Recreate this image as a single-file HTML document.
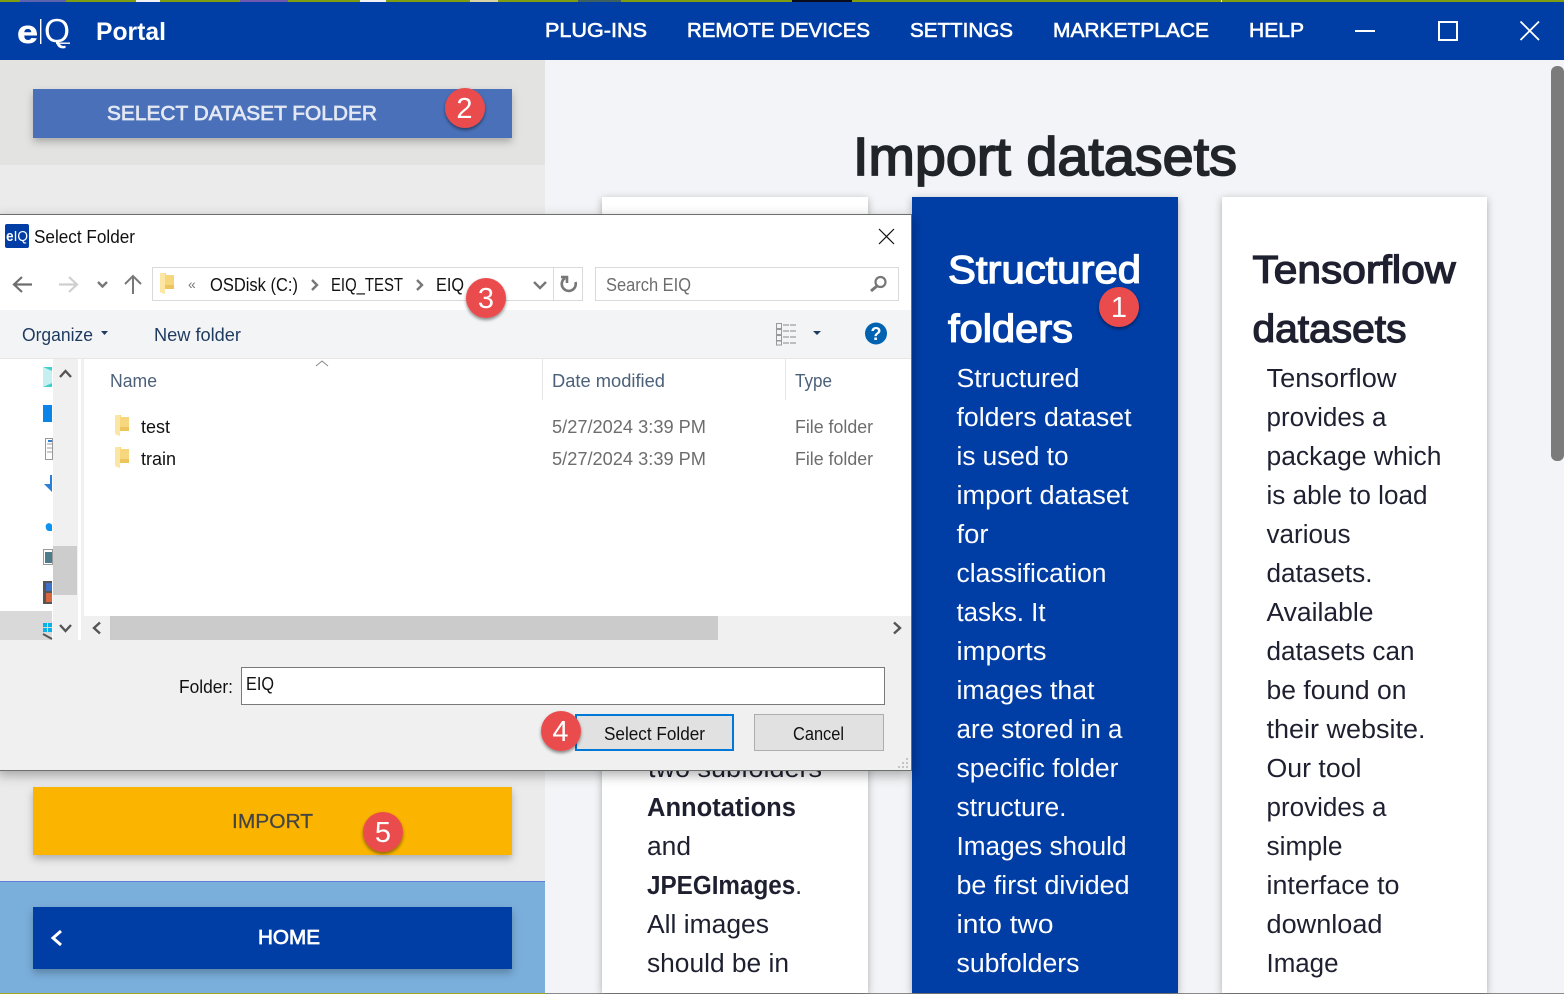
<!DOCTYPE html>
<html><head><meta charset="utf-8"><title>eIQ Portal</title>
<style>
html,body{margin:0;padding:0;width:1564px;height:994px;overflow:hidden;background:#f3f4f7}
svg{display:block}
text{font-family:"Liberation Sans",sans-serif;white-space:pre}
.b{font-size:25.5px;fill:#1e2030}
.w{font-size:25.5px;fill:#fff}
.h{font-size:39px;fill:#1e2030;stroke:#1e2030;stroke-width:1.3px}
.hw{font-size:39px;fill:#fff;stroke:#fff;stroke-width:1.3px}
.nav{font-size:20px;fill:#fff;stroke:#fff;stroke-width:.6px}
.d{font-size:18px;fill:#111}
.g{font-size:18px;fill:#6d6d6d}
.o{font-size:18px;fill:#1f3a5f}
.n{font-size:18px;fill:#4c607a}
.num{font-size:29px;fill:#fff;text-anchor:middle}
</style></head><body>
<svg width="1564" height="994" viewBox="0 0 1564 994" xmlns="http://www.w3.org/2000/svg">
<defs>
<filter id="s" x="-10%" y="-10%" width="120%" height="120%"><feDropShadow dx="0" dy="2" stdDeviation="4" flood-color="#000" flood-opacity=".3"/></filter>
<filter id="sb" x="-10%" y="-30%" width="120%" height="170%"><feDropShadow dx="0" dy="4" stdDeviation="4" flood-color="#000" flood-opacity=".25"/></filter>
<filter id="sd" x="-5%" y="-5%" width="110%" height="110%"><feDropShadow dx="0" dy="4" stdDeviation="6" flood-color="#000" flood-opacity=".32"/></filter>
<filter id="sc" x="-30%" y="-30%" width="160%" height="170%"><feDropShadow dx="0" dy="2" stdDeviation="1.5" flood-color="#000" flood-opacity=".45"/></filter>
<g id="fld"><path d="M0 0H6V2H14V16H5V21L0 19Z" fill="#f6d77d"/><path d="M0 0H5V21L0 19Z" fill="#fbe6a4"/><path d="M5 16H14V12H5Z" fill="#eec45e"/></g>
</defs>

<!-- background -->
<rect width="1564" height="994" fill="#f3f4f7"/>
<!-- top strip -->
<rect width="1564" height="2" fill="#7f9d10"/>
<rect x="20" width="46" height="2" fill="#5b62ae"/><rect x="136" width="24" height="2" fill="#f1f1f7"/><rect x="240" width="48" height="2" fill="#6f58b0"/><rect x="360" width="26" height="2" fill="#f1f1f7"/><rect x="470" width="28" height="2" fill="#d9d3a8"/><rect x="578" width="43" height="2" fill="#3d6060"/><rect x="792" width="60" height="2" fill="#0b0b1e"/><rect x="1221" width="1" height="2" fill="#fff"/>
<!-- header -->
<rect y="2" width="1564" height="58" fill="#003da5"/>
<text x="17" y="43" font-size="32" font-weight="bold" fill="#fff" textLength="21" lengthAdjust="spacingAndGlyphs" stroke="#fff" stroke-width=".5">e</text>
<rect x="40" y="19" width="1.4" height="25" fill="#fff"/>
<text x="44" y="42" font-size="33" fill="#fff" textLength="26" lengthAdjust="spacingAndGlyphs">Q</text>
<rect x="56" y="42.500" width="14" height="1.4" fill="#fff"/>
<text x="96" y="40" font-size="25" font-weight="bold" fill="#fff" textLength="70" lengthAdjust="spacingAndGlyphs">Portal</text>
<text class="nav" x="545" y="37" textLength="102" lengthAdjust="spacingAndGlyphs">PLUG-INS</text>
<text class="nav" x="687" y="37" textLength="183" lengthAdjust="spacingAndGlyphs">REMOTE DEVICES</text>
<text class="nav" x="910" y="37" textLength="103" lengthAdjust="spacingAndGlyphs">SETTINGS</text>
<text class="nav" x="1053" y="37" textLength="156" lengthAdjust="spacingAndGlyphs">MARKETPLACE</text>
<text class="nav" x="1249" y="37" textLength="55" lengthAdjust="spacingAndGlyphs">HELP</text>
<rect x="1355" y="30" width="20" height="2" fill="#fff"/>
<rect x="1439" y="22" width="18" height="18" fill="none" stroke="#fff" stroke-width="2"/>
<path d="M1520.500 21.500L1539 40M1539 21.500L1520.500 40" stroke="#fff" stroke-width="1.8" fill="none"/>

<!-- left panel -->
<rect y="60" width="545" height="933" fill="#ebebeb"/>
<rect y="60" width="545" height="105" fill="#e3e3e1"/>
<rect x="33" y="89" width="479" height="49" fill="#4870b8" filter="url(#sb)"/>
<text x="107" y="120" font-size="20" fill="#e3e8f3" stroke="#e3e8f3" stroke-width=".7" textLength="270" lengthAdjust="spacingAndGlyphs">SELECT DATASET FOLDER</text>
<rect x="33" y="787" width="479" height="68" fill="#fbb500" filter="url(#sb)"/>
<text x="232" y="828" font-size="20" fill="#444" stroke="#444" stroke-width=".25" textLength="81" lengthAdjust="spacingAndGlyphs">IMPORT</text>
<rect y="881" width="545" height="112" fill="#7aaedb"/>
<rect y="881" width="545" height="1" fill="#5f7fd8"/>
<rect x="33" y="907" width="479" height="62" fill="#003da5" filter="url(#sb)"/>
<path d="M61 931L53 938L61 945" stroke="#fff" stroke-width="3" fill="none"/>
<text x="258" y="944" font-size="20" fill="#fff" stroke="#fff" stroke-width=".7" textLength="62" lengthAdjust="spacingAndGlyphs">HOME</text>
<rect y="993" width="545" height="1" fill="#a6a61e"/>
<rect x="545" y="993" width="1019" height="1" fill="#8a8a8a"/>

<!-- title -->
<text x="853" y="175" font-size="54" fill="#212529" stroke="#212529" stroke-width="1.7" textLength="384" lengthAdjust="spacingAndGlyphs">Import datasets</text>

<!-- card 1 -->
<rect x="602" y="197" width="266" height="796" fill="#fff" filter="url(#s)"/>
<text class="b" x="648" y="777" textLength="174" lengthAdjust="spacingAndGlyphs">two subfolders</text>
<text class="b" x="647" y="816" font-weight="bold" textLength="149" lengthAdjust="spacingAndGlyphs">Annotations</text>
<text class="b" x="647" y="855" textLength="44" lengthAdjust="spacingAndGlyphs">and</text>
<text class="b" x="647" y="894" textLength="155" lengthAdjust="spacingAndGlyphs"><tspan font-weight="bold">JPEGImages</tspan>.</text>
<text class="b" x="647" y="933" textLength="122" lengthAdjust="spacingAndGlyphs">All images</text>
<text class="b" x="647" y="972" textLength="142" lengthAdjust="spacingAndGlyphs">should be in</text>

<!-- card 2 -->
<rect x="912" y="197" width="266" height="796" fill="#003da5" filter="url(#s)"/>
<text class="hw" x="948" y="283" textLength="193" lengthAdjust="spacingAndGlyphs">Structured</text>
<text class="hw" x="948" y="342" textLength="125" lengthAdjust="spacingAndGlyphs">folders</text>
<text class="w" x="956.500" y="387" textLength="123" lengthAdjust="spacingAndGlyphs">Structured</text>
<text class="w" x="956.500" y="426" textLength="175" lengthAdjust="spacingAndGlyphs">folders dataset</text>
<text class="w" x="956.500" y="465" textLength="112" lengthAdjust="spacingAndGlyphs">is used to</text>
<text class="w" x="956.500" y="504" textLength="172" lengthAdjust="spacingAndGlyphs">import dataset</text>
<text class="w" x="956.500" y="543" textLength="32" lengthAdjust="spacingAndGlyphs">for</text>
<text class="w" x="956.500" y="582" textLength="150" lengthAdjust="spacingAndGlyphs">classification</text>
<text class="w" x="956.500" y="621" textLength="89" lengthAdjust="spacingAndGlyphs">tasks. It</text>
<text class="w" x="956.500" y="660" textLength="90" lengthAdjust="spacingAndGlyphs">imports</text>
<text class="w" x="956.500" y="699" textLength="138" lengthAdjust="spacingAndGlyphs">images that</text>
<text class="w" x="956.500" y="738" textLength="166" lengthAdjust="spacingAndGlyphs">are stored in a</text>
<text class="w" x="956.500" y="777" textLength="162" lengthAdjust="spacingAndGlyphs">specific folder</text>
<text class="w" x="956.500" y="816" textLength="110" lengthAdjust="spacingAndGlyphs">structure.</text>
<text class="w" x="956.500" y="855" textLength="170" lengthAdjust="spacingAndGlyphs">Images should</text>
<text class="w" x="956.500" y="894" textLength="173" lengthAdjust="spacingAndGlyphs">be first divided</text>
<text class="w" x="956.500" y="933" textLength="97" lengthAdjust="spacingAndGlyphs">into two</text>
<text class="w" x="956.500" y="972" textLength="123" lengthAdjust="spacingAndGlyphs">subfolders</text>

<!-- card 3 -->
<rect x="1222" y="197" width="265" height="796" fill="#fff" filter="url(#s)"/>
<text class="h" x="1252.500" y="283" textLength="203" lengthAdjust="spacingAndGlyphs">Tensorflow</text>
<text class="h" x="1252.500" y="342" textLength="154" lengthAdjust="spacingAndGlyphs">datasets</text>
<text class="b" x="1266.500" y="387" textLength="130" lengthAdjust="spacingAndGlyphs">Tensorflow</text>
<text class="b" x="1266.500" y="426" textLength="120" lengthAdjust="spacingAndGlyphs">provides a</text>
<text class="b" x="1266.500" y="465" textLength="175" lengthAdjust="spacingAndGlyphs">package which</text>
<text class="b" x="1266.500" y="504" textLength="161" lengthAdjust="spacingAndGlyphs">is able to load</text>
<text class="b" x="1266.500" y="543" textLength="84" lengthAdjust="spacingAndGlyphs">various</text>
<text class="b" x="1266.500" y="582" textLength="106" lengthAdjust="spacingAndGlyphs">datasets.</text>
<text class="b" x="1266.500" y="621" textLength="107" lengthAdjust="spacingAndGlyphs">Available</text>
<text class="b" x="1266.500" y="660" textLength="148" lengthAdjust="spacingAndGlyphs">datasets can</text>
<text class="b" x="1266.500" y="699" textLength="140" lengthAdjust="spacingAndGlyphs">be found on</text>
<text class="b" x="1266.500" y="738" textLength="159" lengthAdjust="spacingAndGlyphs">their website.</text>
<text class="b" x="1266.500" y="777" textLength="95" lengthAdjust="spacingAndGlyphs">Our tool</text>
<text class="b" x="1266.500" y="816" textLength="120" lengthAdjust="spacingAndGlyphs">provides a</text>
<text class="b" x="1266.500" y="855" textLength="76" lengthAdjust="spacingAndGlyphs">simple</text>
<text class="b" x="1266.500" y="894" textLength="133" lengthAdjust="spacingAndGlyphs">interface to</text>
<text class="b" x="1266.500" y="933" textLength="116" lengthAdjust="spacingAndGlyphs">download</text>
<text class="b" x="1266.500" y="972" textLength="72" lengthAdjust="spacingAndGlyphs">Image</text>

<!-- page scrollbar -->
<rect x="1551" y="66" width="13" height="395" rx="6" fill="#7b7b7b"/>

<!-- dialog -->
<rect x="-2" y="214.500" width="913.500" height="556" fill="#f0f0f0" stroke="#6e6e6e" filter="url(#sd)"/>
<rect x="0" y="215" width="911" height="95" fill="#fff"/>
<rect x="0" y="310" width="911" height="48" fill="#f3f4f6"/>
<rect x="0" y="358" width="911" height="1" fill="#e6e6e6"/>
<rect x="0" y="359" width="911" height="281" fill="#fff"/>

<!-- title bar -->
<rect x="5" y="224" width="24" height="24" rx="2" fill="#003da5"/>
<text x="6" y="241" font-size="15" fill="#fff" textLength="22" lengthAdjust="spacingAndGlyphs"><tspan font-weight="bold">e</tspan>IQ</text>
<text class="d" x="34" y="243" textLength="101" lengthAdjust="spacingAndGlyphs">Select Folder</text>
<path d="M879 229L894 244M894 229L879 244" stroke="#111" stroke-width="1.2" fill="none"/>

<!-- nav row -->
<path d="M32 284.500H14M22 277L14 284.500L22 292" stroke="#6e6e6e" stroke-width="2.200" fill="none"/>
<path d="M59 284.500H77M69 277L77 284.500L69 292" stroke="#cfcfcf" stroke-width="2.200" fill="none"/>
<path d="M98 282L102.500 286.500L107 282" stroke="#777" stroke-width="2.400" fill="none"/>
<path d="M133 294V276M125 284L133 276L141 284" stroke="#777" stroke-width="2" fill="none"/>
<rect x="152.500" y="267.500" width="430" height="33" fill="#fff" stroke="#d9d9d9"/>
<rect x="553" y="268" width="1" height="32" fill="#d9d9d9"/>
<use href="#fld" x="160" y="273"/>
<text x="188" y="289" font-size="14" fill="#777">«</text>
<text class="d" x="210" y="291" textLength="88" lengthAdjust="spacingAndGlyphs">OSDisk (C:)</text>
<path d="M312 280L317 285L312 290" stroke="#777" stroke-width="2.400" fill="none"/>
<text class="d" x="331" y="291" textLength="72" lengthAdjust="spacingAndGlyphs">EIQ_TEST</text>
<path d="M417 280L422 285L417 290" stroke="#777" stroke-width="2.400" fill="none"/>
<text class="d" x="436" y="291" textLength="28" lengthAdjust="spacingAndGlyphs">EIQ</text>
<path d="M534 282L540 288L546 282" stroke="#777" stroke-width="2.400" fill="none"/>
<path d="M565 278A7 7 0 1 0 575.500 282M561 277H567V283" stroke="#777" stroke-width="2.600" fill="none"/>
<rect x="595.500" y="267.500" width="303" height="33" fill="#fff" stroke="#d9d9d9"/>
<text class="g" x="606" y="291" textLength="85" lengthAdjust="spacingAndGlyphs">Search EIQ</text>
<circle cx="880.500" cy="282" r="5" fill="none" stroke="#777" stroke-width="2.200"/>
<path d="M877 286L871 291" stroke="#777" stroke-width="3" fill="none"/>

<!-- toolbar -->
<text class="o" x="22" y="341" textLength="71" lengthAdjust="spacingAndGlyphs">Organize</text>
<path d="M101 331H108L104.500 335Z" fill="#1f3a5f"/>
<text class="o" x="154" y="341" textLength="87" lengthAdjust="spacingAndGlyphs">New folder</text>
<g fill="none" stroke="#999"><rect x="776.500" y="323.500" width="5" height="5"/><rect x="776.500" y="329.500" width="5" height="5"/><rect x="776.500" y="335.500" width="5" height="5"/><rect x="776.500" y="341" width="5" height="4"/></g>
<path d="M783 325H797M783 331H797M783 337H797M783 343H797" stroke="#888" stroke-dasharray="6 1" fill="none"/>
<path d="M813 331H821L817 335Z" fill="#1f3a5f"/>
<circle cx="876" cy="333.500" r="11" fill="#0063b1"/>
<text x="876" y="340" font-size="18" font-weight="bold" fill="#fff" text-anchor="middle">?</text>

<!-- left nav -->
<path d="M43 367L52 371V383L43 387Z" fill="#c6efef"/><path d="M43 367L52 367V371ZM43 387L52 387V383Z" fill="#3fcfd0"/>
<rect x="43" y="405" width="9" height="17" fill="#0a84e8"/>
<rect x="45.500" y="438.500" width="7" height="21" fill="#fff" stroke="#999"/><path d="M47 444H52M47 448H52M47 452H52" stroke="#999"/><path d="M48 441H52" stroke="#2b7fd8" stroke-width="2"/>
<path d="M50 475H52V492L44 484H50Z" fill="#2b7fd8"/>
<path d="M46 528A3 3 0 0 1 52 525V531H49A3 3 0 0 1 46 528Z" fill="#0a94f0"/>
<rect x="43.500" y="549.500" width="9" height="15" fill="#fff" stroke="#999"/><rect x="45" y="552" width="7" height="11" fill="#4d7d8c"/>
<rect x="43" y="581" width="9" height="23" fill="#555"/><rect x="46" y="583" width="6" height="8" fill="#3e72c8"/><rect x="46" y="593" width="6" height="9" fill="#d9663f"/>
<rect x="0" y="611" width="52" height="29" fill="#d9d9d9"/>
<path d="M43 623H47V627H43ZM48 623H52V627H48ZM43 628H47V632H43ZM48 628H52V632H48Z" fill="#0ab0e8"/>
<path d="M43 634L52 639" stroke="#555" stroke-width="2"/>
<rect x="53" y="359" width="25" height="281" fill="#f0f0f0"/>
<rect x="53" y="546" width="24" height="49" fill="#cdcdcd"/>
<path d="M60 377L65.500 371L71 377" stroke="#555" stroke-width="2.400" fill="none"/>
<path d="M60 625L65.500 631L71 625" stroke="#555" stroke-width="2.400" fill="none"/>
<rect x="81" y="359" width="3" height="281" fill="#f0f0f0"/>

<!-- list -->
<text class="n" x="110" y="387" textLength="47" lengthAdjust="spacingAndGlyphs">Name</text>
<text class="n" x="552" y="387" textLength="113" lengthAdjust="spacingAndGlyphs">Date modified</text>
<text class="n" x="795" y="387" textLength="37" lengthAdjust="spacingAndGlyphs">Type</text>
<path d="M316 366L322 361L328 366" stroke="#888" fill="none"/>
<rect x="542" y="359" width="1" height="41" fill="#e5e5e5"/>
<rect x="785" y="359" width="1" height="41" fill="#e5e5e5"/>
<use href="#fld" x="115" y="415"/>
<text class="d" x="141" y="433" textLength="29" lengthAdjust="spacingAndGlyphs">test</text>
<text class="g" x="552" y="433" textLength="154" lengthAdjust="spacingAndGlyphs">5/27/2024 3:39 PM</text>
<text class="g" x="795" y="433" textLength="78" lengthAdjust="spacingAndGlyphs">File folder</text>
<use href="#fld" x="115" y="447"/>
<text class="d" x="141" y="465" textLength="35" lengthAdjust="spacingAndGlyphs">train</text>
<text class="g" x="552" y="465" textLength="154" lengthAdjust="spacingAndGlyphs">5/27/2024 3:39 PM</text>
<text class="g" x="795" y="465" textLength="78" lengthAdjust="spacingAndGlyphs">File folder</text>

<!-- horizontal scrollbar -->
<rect x="84" y="616" width="827" height="24" fill="#f0f0f0"/>
<rect x="110" y="616" width="608" height="24" fill="#cbcbcb"/>
<path d="M100 622.500L94 628L100 633.500" stroke="#555" stroke-width="2.400" fill="none"/>
<path d="M894 622.500L900 628L894 633.500" stroke="#555" stroke-width="2.400" fill="none"/>

<!-- footer -->
<text class="d" x="179" y="693" textLength="54" lengthAdjust="spacingAndGlyphs">Folder:</text>
<rect x="241.500" y="667.500" width="643" height="37" fill="#fff" stroke="#7a7a7a"/>
<text class="d" x="246" y="690" textLength="28" lengthAdjust="spacingAndGlyphs">EIQ</text>
<rect x="576" y="715" width="157" height="35" fill="#e1e1e1" stroke="#0078d7" stroke-width="2"/>
<text class="d" x="604" y="740" textLength="101" lengthAdjust="spacingAndGlyphs">Select Folder</text>
<rect x="754.500" y="714.500" width="129" height="36" fill="#e1e1e1" stroke="#adadad"/>
<text class="d" x="793" y="740" textLength="51" lengthAdjust="spacingAndGlyphs">Cancel</text>
<path d="M906 758h2v2h-2zM902 762h2v2h-2zM906 762h2v2h-2zM898 766h2v2h-2zM902 766h2v2h-2zM906 766h2v2h-2z" fill="#c4c4c4"/>

<!-- badges -->
<g filter="url(#sc)"><circle cx="1119" cy="307" r="20" fill="#ea4b4d"/></g>
<text class="num" x="1119" y="317">1</text>
<g filter="url(#sc)"><circle cx="465" cy="108" r="20" fill="#ea4b4d"/></g>
<text class="num" x="464.500" y="118">2</text>
<g filter="url(#sc)"><circle cx="486" cy="298" r="20" fill="#ea4b4d"/></g>
<text class="num" x="486" y="308">3</text>
<g filter="url(#sc)"><circle cx="561" cy="731" r="20" fill="#ea4b4d"/></g>
<text class="num" x="560.500" y="741">4</text>
<g filter="url(#sc)"><circle cx="383" cy="832" r="20" fill="#ea4b4d"/></g>
<text class="num" x="383" y="842">5</text>
</svg>
</body></html>
